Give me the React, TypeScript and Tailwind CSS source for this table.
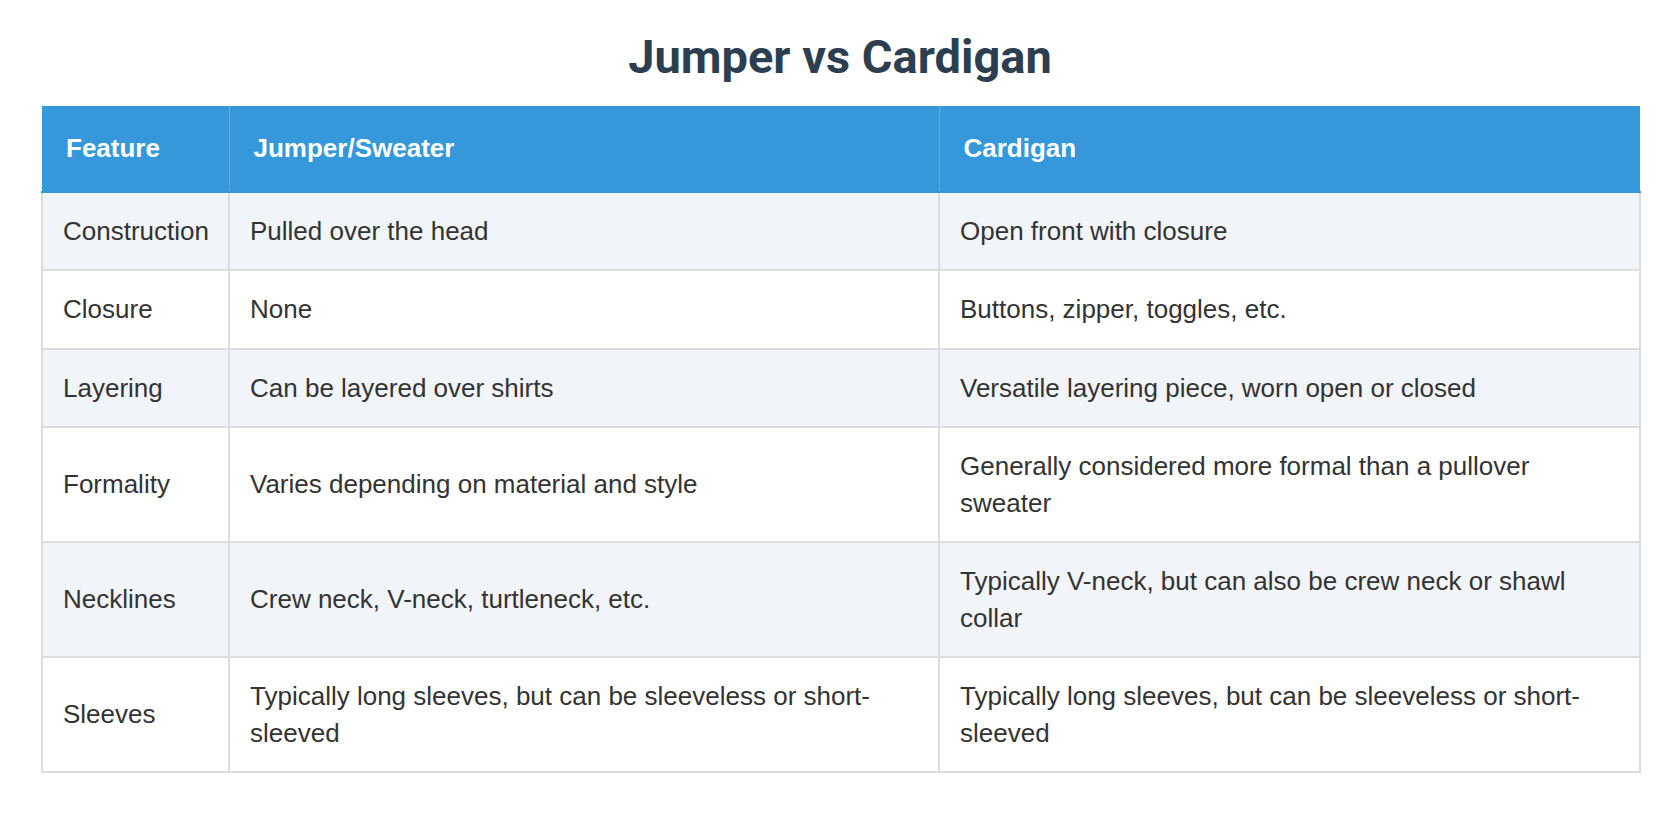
const rows = [
  { feature: 'Construction', jumper: 'Pulled over the head', cardigan: 'Open front with closure' },
  { feature: 'Closure', jumper: 'None', cardigan: 'Buttons, zipper, toggles, etc.' },
  { feature: 'Layering', jumper: 'Can be layered over shirts', cardigan: 'Versatile layering piece, worn open or closed' },
  { feature: 'Formality', jumper: 'Varies depending on material and style', cardigan: 'Generally considered more formal than a pullover sweater' },
  { feature: 'Necklines', jumper: 'Crew neck, V-neck, turtleneck, etc.', cardigan: 'Typically V-neck, but can also be crew neck or shawl collar' },
  { feature: 'Sleeves', jumper: 'Typically long sleeves, but can be sleeveless or short-sleeved', cardigan: 'Typically long sleeves, but can be sleeveless or short-sleeved' },
];

export default function App() {
  return (
    <div className="min-h-screen bg-white px-[41px] pt-[33px] font-['Liberation_Sans',Arial,sans-serif] text-[#333]">
      <h1 className="text-center font-['Roboto',sans-serif] text-[47px] font-bold leading-none text-[#2c3e50]">
        Jumper vs Cardigan
      </h1>

      <table className="mt-[26px] w-full table-fixed border-collapse text-[26px] leading-[36.5px]">
        <colgroup>
          <col className="w-[187px]" />
          <col className="w-[710px]" />
          <col className="w-[701px]" />
        </colgroup>
        <thead>
          <tr className="bg-[#3498db] text-left text-white">
            <th className="border-b-2 border-r border-[#3498db] border-r-[#5dade2] px-[24px] py-[24px] font-bold">Feature</th>
            <th className="border-b-2 border-r border-[#3498db] border-r-[#5dade2] px-[24px] py-[24px] font-bold">Jumper/Sweater</th>
            <th className="border-b-2 border-[#3498db] px-[24px] py-[24px] font-bold">Cardigan</th>
          </tr>
        </thead>
        <tbody>
          {rows.map((row, i) => (
            <tr key={row.feature} className={i % 2 === 0 ? 'bg-[#f1f4f9]' : 'bg-white'}>
              <td className="border-2 border-[#dddddd] px-[20px] py-[20px] align-middle">{row.feature}</td>
              <td className="border-2 border-[#dddddd] px-[20px] py-[20px] align-middle">{row.jumper}</td>
              <td className="border-2 border-[#dddddd] px-[20px] py-[20px] align-middle">{row.cardigan}</td>
            </tr>
          ))}
        </tbody>
      </table>
    </div>
  );
}
